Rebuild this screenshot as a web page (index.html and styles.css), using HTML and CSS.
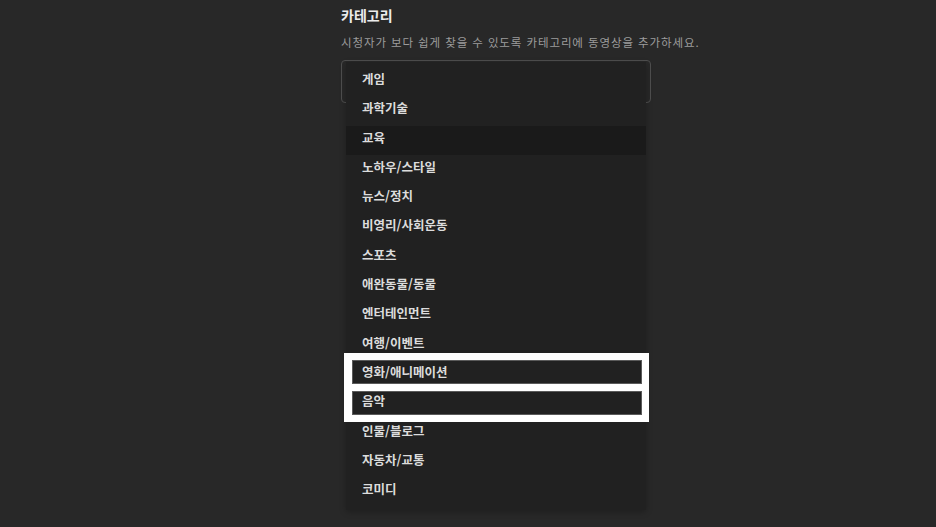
FILE: index.html
```html
<!DOCTYPE html>
<html lang="ko">
<head>
    <meta charset="UTF-8">
    <title>카테고리</title>
    <link rel="stylesheet" href="styles.css">
</head>
<body>
    <div class="section">
        <h3 class="title">카테고리</h3>
        <p class="hint">시청자가 보다 쉽게 찾을 수 있도록 카테고리에 동영상을 추가하세요.</p>
        <div class="select-wrap">
            <div class="select"></div>
            <ul class="menu">
                <li class="item">게임</li>
                <li class="item">과학기술</li>
                <li class="item active">교육</li>
                <li class="item">노하우/스타일</li>
                <li class="item">뉴스/정치</li>
                <li class="item">비영리/사회운동</li>
                <li class="item">스포츠</li>
                <li class="item">애완동물/동물</li>
                <li class="item">엔터테인먼트</li>
                <li class="item">여행/이벤트</li>
                <li class="item">영화/애니메이션</li>
                <li class="item">음악</li>
                <li class="item">인물/블로그</li>
                <li class="item">자동차/교통</li>
                <li class="item">코미디</li>
            </ul>
            <!-- 강조 표시 (영화/애니메이션, 음악) -->
            <div class="mark">
                <div class="mark-row"></div>
                <div class="mark-gap"></div>
                <div class="mark-row"></div>
            </div>
        </div>
    </div>
</body>
</html>
```

FILE: styles.css
```css
body {
    margin: 0;
    padding: 0;
    background: #282828;
    font-family: "Noto Sans CJK KR", "Noto Sans", sans-serif;
    min-height: 100vh;
}
.section {
    width: 310px;
    margin-left: 341px;
    padding-top: 4px;
}
.title {
    margin: 0;
    font-size: 14px;
    line-height: 22px;
    font-weight: bold;
    color: #ececec;
}
.hint {
    margin: 6px 0 0 0;
    font-size: 11.5px;
    line-height: 20px;
    letter-spacing: 0.9px;
    color: #9c9c9c;
    white-space: nowrap;
}
.select-wrap {
    position: relative;
    margin-top: 8px;
}
.select {
    height: 43px;
    box-sizing: border-box;
    border: 1px solid #4e4e4e;
    border-radius: 4px;
}
.menu {
    position: absolute;
    left: 5px;
    top: 2px;
    width: 300px;
    height: 448px;
    box-sizing: border-box;
    margin: 0;
    padding: 5px 0 0 0;
    list-style: none;
    background: #212121;
    box-shadow: 0 2px 6px rgba(0,0,0,0.25);
}
.item {
    height: 29.3px;
    box-sizing: border-box;
    padding: 1px 16px 0 16px;
    font-size: 12.5px;
    line-height: 22px;
    font-weight: bold;
    color: #dcdcdc;
}
.item.active {
    background: #1a1a1a;
}
.mark {
    position: absolute;
    left: 3px;
    top: 293px;
    width: 305px;
    box-sizing: border-box;
    border: 7px solid #fff;
    border-left-width: 8px;
}
.mark-row {
    height: 24px;
    box-sizing: border-box;
    border: 1px solid #5a5a5a;
}
.mark-gap {
    height: 7px;
    background: #fff;
}
```
